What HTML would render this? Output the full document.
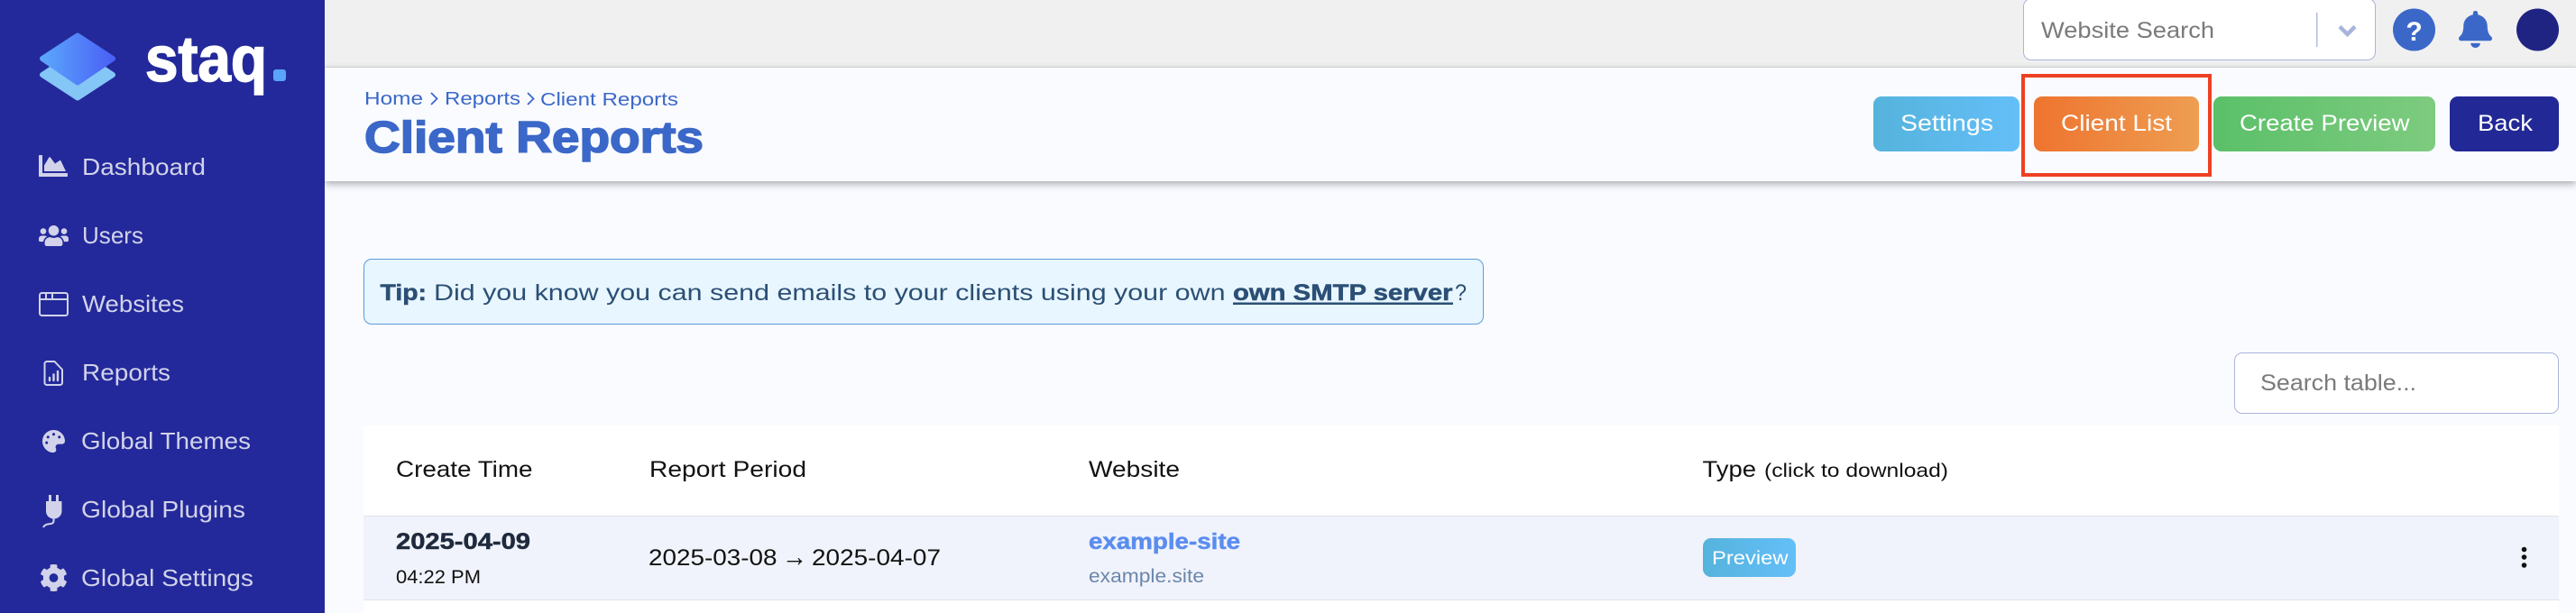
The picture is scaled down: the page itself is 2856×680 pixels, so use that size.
<!DOCTYPE html>
<html lang="en">
<head>
<meta charset="utf-8">
<title>Client Reports</title>
<style>
html,body{margin:0;padding:0;width:2856px;height:680px;overflow:hidden;background:#fafbff;font-family:"Liberation Sans",sans-serif}
.a{position:absolute;box-sizing:border-box}
svg{position:absolute;left:0;top:0}
text{font-family:"Liberation Sans",sans-serif}
</style>
</head>
<body>
<div class="a" style="left:360px;top:0;width:2496px;height:75px;background:#f0f0f0;border-bottom:1.500px solid #dcdcdc"></div>
<div class="a" style="left:360px;top:75px;width:2496px;height:126px;background:#fafbff;box-shadow:0 3px 8px rgba(60,60,70,.42)"></div>
<div class="a" style="left:0;top:0;width:360px;height:680px;background:#23299a"></div>
<div class="a" style="left:2243px;top:-2px;width:391px;height:69px;background:#fff;border:1px solid #a9b5dc;border-radius:9px"></div>
<div class="a" style="left:2077px;top:107px;width:162px;height:61px;border-radius:9px;background:linear-gradient(90deg,#55b3dc,#64bff8)"></div>
<div class="a" style="left:2255px;top:107px;width:183px;height:61px;border-radius:9px;background:linear-gradient(90deg,#ee742f,#ee9e52)"></div>
<div class="a" style="left:2454px;top:107px;width:246px;height:61px;border-radius:9px;background:linear-gradient(90deg,#5bc069,#7dcb7f)"></div>
<div class="a" style="left:2716px;top:107px;width:121px;height:61px;border-radius:9px;background:#222895"></div>
<div class="a" style="left:2241px;top:82px;width:211px;height:114px;border:4px solid #ee4023"></div>
<div class="a" style="left:403px;top:287px;width:1242px;height:73px;background:#e8f6ff;border:1px solid #5a9bd8;border-radius:9px"></div>
<div class="a" style="left:2477px;top:391px;width:360px;height:68px;background:#fff;border:1px solid #a9b5dc;border-radius:9px"></div>
<div class="a" style="left:403px;top:472px;width:2434px;height:208px;background:#fff"></div>
<div class="a" style="left:403px;top:572px;width:2434px;height:94px;background:#f0f3fb;border-top:1.500px solid #e0e2e7;border-bottom:1.500px solid #e0e2e7"></div>
<div class="a" style="left:1888px;top:597px;width:103px;height:43px;border-radius:9px;background:linear-gradient(90deg,#55b3dc,#64bff8)"></div>

<svg width="2856" height="680" viewBox="0 0 2856 680" xmlns="http://www.w3.org/2000/svg">
<defs>
<linearGradient id="lg" x1="0" y1="0" x2="1" y2="0"><stop offset="0" stop-color="#5ba6fb"/><stop offset="1" stop-color="#4a60f6"/></linearGradient>
</defs>
<!-- logo -->
<path d="M47 83L86 57L125 83L86 108.500Z" fill="#84c6f6" stroke="#84c6f6" stroke-width="6" stroke-linejoin="round"/>
<path d="M47 65L86 39.500L125 65L86 91.500Z" fill="url(#lg)" stroke="url(#lg)" stroke-width="6" stroke-linejoin="round"/>
<text x="161" y="90" font-size="71" font-weight="700" fill="#fff" stroke="#fff" stroke-width="1.600" textLength="135" lengthAdjust="spacingAndGlyphs">staq</text>
<rect x="303" y="77" width="14" height="13" rx="3" fill="#5ba4fb"/>

<!-- sidebar icons -->
<g fill="#d2d3ea">
<svg x="43" y="168" width="32" height="32" viewBox="0 0 512 512"><path d="M500 384c6.600 0 12 5.400 12 12v40c0 6.600-5.400 12-12 12H12c-6.600 0-12-5.400-12-12V76c0-6.600 5.400-12 12-12h40c6.600 0 12 5.400 12 12v308h436zM372.700 159.500L288 216l-85.300-113.700c-5.100-6.800-15.500-6.300-19.900 1L96 248v104h384l-89.900-187.800c-3.200-6.500-11.400-8.700-17.400-4.700z"/></svg>
<svg x="43" y="248" width="33" height="27" viewBox="0 0 640 512"><path d="M96 224c35.300 0 64-28.700 64-64s-28.700-64-64-64-64 28.700-64 64 28.700 64 64 64zm448 0c35.300 0 64-28.700 64-64s-28.700-64-64-64-64 28.700-64 64 28.700 64 64 64zm32 32h-64c-17.600 0-33.500 7.100-45.100 18.600 40.300 22.100 68.900 62 75.100 109.400h66c17.700 0 32-14.300 32-32v-32c0-35.300-28.700-64-64-64zm-256 0c61.900 0 112-50.100 112-112S381.900 32 320 32 208 82.100 208 144s50.100 112 112 112zm76.800 32h-8.300c-20.800 10-43.900 16-68.500 16s-47.600-6-68.500-16h-8.300C179.600 288 128 339.600 128 403.200V432c0 26.500 21.500 48 48 48h288c26.500 0 48-21.500 48-48v-28.800c0-63.600-51.600-115.200-115.200-115.200zm-223.700-13.400C161.500 263.100 145.600 256 128 256H64c-35.300 0-64 28.700-64 64v32c0 17.700 14.300 32 32 32h65.900c6.300-47.400 34.900-87.300 75.200-109.400z"/></svg>
<svg x="47" y="477" width="25" height="25" viewBox="0 0 512 512"><path d="M204.300 5C104.900 24.400 24.800 104.300 5.200 203.400c-37 187 131.700 326.400 258.800 306.700 41.200-6.400 61.400-54.600 42.500-91.700-23.100-45.400 9.900-98.400 60.900-98.400h79.700c35.800 0 64.800-29.600 64.900-65.300C511.500 97.100 368.100-26.900 204.300 5zM96 320c-17.700 0-32-14.300-32-32s14.300-32 32-32 32 14.300 32 32-14.300 32-32 32zm32-128c-17.700 0-32-14.300-32-32s14.300-32 32-32 32 14.300 32 32-14.300 32-32 32zm128-64c-17.700 0-32-14.300-32-32s14.300-32 32-32 32 14.300 32 32-14.300 32-32 32zm128 64c-17.700 0-32-14.300-32-32s14.300-32 32-32 32 14.300 32 32-14.300 32-32 32z"/></svg>
<svg x="44" y="625" width="31" height="32" viewBox="0 0 512 512"><path d="M487.400 315.700l-42.600-24.600c4.300-23.200 4.300-47 0-70.200l42.600-24.600c4.900-2.800 7.100-8.600 5.500-14-11.100-35.600-30-67.800-54.700-94.600-3.800-4.100-10-5.100-14.800-2.300L380.800 110c-17.900-15.400-38.500-27.300-60.800-35.100V25.800c0-5.600-3.900-10.500-9.400-11.700-36.700-8.200-74.300-7.800-109.200 0-5.500 1.200-9.400 6.100-9.400 11.700V75c-22.200 7.900-42.800 19.800-60.800 35.100L88.700 85.500c-4.900-2.800-11-1.900-14.800 2.300-24.700 26.700-43.600 58.900-54.700 94.600-1.700 5.400.6 11.200 5.500 14L67.300 221c-4.300 23.200-4.300 47 0 70.200l-42.600 24.600c-4.900 2.800-7.100 8.600-5.500 14 11.100 35.600 30 67.800 54.700 94.600 3.800 4.100 10 5.100 14.800 2.300l42.600-24.600c17.900 15.400 38.500 27.300 60.800 35.100v49.200c0 5.600 3.900 10.500 9.400 11.700 36.700 8.200 74.300 7.800 109.200 0 5.500-1.200 9.400-6.100 9.400-11.700v-49.200c22.200-7.900 42.800-19.800 60.800-35.100l42.600 24.600c4.900 2.800 11 1.900 14.800-2.300 24.700-26.700 43.600-58.900 54.700-94.600 1.500-5.500-.7-11.300-5.600-14.100zM256 336c-44.100 0-80-35.900-80-80s35.900-80 80-80 80 35.900 80 80-35.900 80-80 80z"/></svg>
<!-- plug -->
<rect x="54" y="549" width="3" height="10"/><rect x="62" y="549" width="3" height="10"/>
<path d="M51 556h17.500v11c0 5-4 8.500-8.750 8.500S51 572 51 567z"/>
</g>
<g fill="none" stroke="#d2d3ea">
<path d="M59.500 574v3.500c0 4-3.500 3.500-6.500 4-2.500.5-4 1.500-5 3.500" stroke-width="2"/>
<!-- window -->
<rect x="44" y="325" width="31" height="25" rx="2.500" stroke-width="2"/>
<path d="M44 332h31M51 325v7M58 325v7" stroke-width="2"/>
<!-- report -->
<path d="M52 401h8.500L69 410v14.500a2.500 2.500 0 0 1-2.500 2.500H52a2.500 2.500 0 0 1-2.500-2.500v-21A2.500 2.500 0 0 1 52 401z" stroke-width="2" stroke-linejoin="round"/>
<path d="M55 422v-3M59.500 422v-6.500M64 422v-10" stroke-width="2.400" stroke-linecap="round"/>
</g>

<!-- sidebar labels -->
<g font-size="26" fill="#d2d3ea">
<text x="91" y="194" textLength="137" lengthAdjust="spacingAndGlyphs">Dashboard</text>
<text x="91" y="270" textLength="68" lengthAdjust="spacingAndGlyphs">Users</text>
<text x="91" y="346" textLength="113" lengthAdjust="spacingAndGlyphs">Websites</text>
<text x="91" y="422" textLength="98" lengthAdjust="spacingAndGlyphs">Reports</text>
<text x="90" y="498" textLength="188" lengthAdjust="spacingAndGlyphs">Global Themes</text>
<text x="90" y="574" textLength="182" lengthAdjust="spacingAndGlyphs">Global Plugins</text>
<text x="90" y="650" textLength="191" lengthAdjust="spacingAndGlyphs">Global Settings</text>
</g>

<!-- breadcrumb -->
<g font-size="20.500" fill="#3b68c8">
<text x="404" y="116" textLength="65" lengthAdjust="spacingAndGlyphs">Home</text>
<text x="493" y="116" textLength="84" lengthAdjust="spacingAndGlyphs">Reports</text>
<text x="599" y="117" textLength="153" lengthAdjust="spacingAndGlyphs">Client Reports</text>
</g>
<path d="M478 103l6.500 6.500-6.500 6.500M585 103l6.500 6.500-6.500 6.500" fill="none" stroke="#3b68c8" stroke-width="1.800"/>
<text x="404" y="169" font-size="49" font-weight="700" fill="#3b68c8" stroke="#3b68c8" stroke-width="1.600" textLength="376" lengthAdjust="spacingAndGlyphs">Client Reports</text>

<!-- top bar -->
<text x="2263" y="42" font-size="25" fill="#7a7a7a" textLength="192" lengthAdjust="spacingAndGlyphs">Website Search</text>
<rect x="2568" y="14" width="1.500" height="38" fill="#b0bbe0"/>
<path d="M2594 29.500l8.500 8.500 8.500-8.500" fill="none" stroke="#a9b4dc" stroke-width="4.500"/>
<circle cx="2676.500" cy="33" r="23.500" fill="#3b68c8"/>
<text x="2676.500" y="45" font-size="30" font-weight="700" fill="#fff" text-anchor="middle">?</text>
<svg x="2726" y="12" width="37" height="41" viewBox="0 0 448 512" preserveAspectRatio="none"><path fill="#3b68c8" d="M224 512c35.320 0 63.970-28.650 63.970-64H160.030c0 35.350 28.650 64 63.970 64zm215.390-149.710c-19.320-20.760-55.470-51.990-55.470-154.290 0-77.700-54.480-139.900-127.940-155.160V32c0-17.670-14.320-32-31.980-32s-31.980 14.330-31.980 32v20.840C118.560 68.100 64.080 130.300 64.080 208c0 102.300-36.150 133.530-55.470 154.290-6 6.450-8.660 14.160-8.610 21.710.11 16.400 12.980 32 32.100 32h383.800c19.120 0 32-15.600 32.100-32 .05-7.550-2.610-15.270-8.610-21.710z"/></svg>
<circle cx="2813.500" cy="33" r="23.500" fill="#1f2483"/>

<!-- buttons -->
<g font-size="25" fill="#fff">
<text x="2107" y="145" textLength="103" lengthAdjust="spacingAndGlyphs">Settings</text>
<text x="2285" y="145" textLength="123" lengthAdjust="spacingAndGlyphs">Client List</text>
<text x="2483" y="145" textLength="188.500" lengthAdjust="spacingAndGlyphs">Create Preview</text>
<text x="2747" y="145" textLength="61" lengthAdjust="spacingAndGlyphs">Back</text>
</g>

<!-- tip -->
<g font-size="25" fill="#2b4f75">
<text x="421.500" y="333" font-weight="700" stroke="#2b4f75" stroke-width=".5" textLength="51.500" lengthAdjust="spacingAndGlyphs">Tip:</text>
<text x="481" y="333" textLength="877.500" lengthAdjust="spacingAndGlyphs">Did you know you can send emails to your clients using your own</text>
<text x="1367" y="333" font-weight="700" stroke="#2b4f75" stroke-width=".5" textLength="243.500" lengthAdjust="spacingAndGlyphs">own SMTP server</text>
<text x="1613" y="333" textLength="13" lengthAdjust="spacingAndGlyphs">?</text>
</g>
<rect x="1367" y="335.500" width="244" height="2.500" fill="#2b4f75"/>

<text x="2506" y="433" font-size="25" fill="#7a7a7a" textLength="173" lengthAdjust="spacingAndGlyphs">Search table...</text>

<!-- table header -->
<g font-size="25" fill="#111">
<text x="439" y="529" textLength="151.500" lengthAdjust="spacingAndGlyphs">Create Time</text>
<text x="720" y="529" textLength="174" lengthAdjust="spacingAndGlyphs">Report Period</text>
<text x="1207" y="529" textLength="101" lengthAdjust="spacingAndGlyphs">Website</text>
<text x="1887.500" y="529" textLength="59.500" lengthAdjust="spacingAndGlyphs">Type</text>
<text x="1956" y="529" font-size="21.500" textLength="204" lengthAdjust="spacingAndGlyphs">(click to download)</text>
</g>

<!-- table row -->
<text x="439" y="609" font-size="25" font-weight="700" fill="#1f2a3d" stroke="#1f2a3d" stroke-width=".5" textLength="149" lengthAdjust="spacingAndGlyphs">2025-04-09</text>
<text x="439" y="647" font-size="21" fill="#111" textLength="94" lengthAdjust="spacingAndGlyphs">04:22 PM</text>
<g font-size="25" fill="#111">
<text x="719" y="627" textLength="142.500" lengthAdjust="spacingAndGlyphs">2025-03-08</text>
<text x="867" y="628" font-size="32" textLength="28" lengthAdjust="spacingAndGlyphs">→</text>
<text x="900" y="627" textLength="143" lengthAdjust="spacingAndGlyphs">2025-04-07</text>
</g>
<text x="1207" y="609" font-size="25" font-weight="700" fill="#5b8def" stroke="#5b8def" stroke-width=".5" textLength="168" lengthAdjust="spacingAndGlyphs">example-site</text>
<text x="1207" y="646" font-size="21" fill="#6b85ab" textLength="128" lengthAdjust="spacingAndGlyphs">example.site</text>
<text x="1898" y="626" font-size="21" fill="#fff" textLength="84.500" lengthAdjust="spacingAndGlyphs">Preview</text>
<g fill="#111"><circle cx="2798.500" cy="609.500" r="2.800"/><circle cx="2798.500" cy="618" r="2.800"/><circle cx="2798.500" cy="627" r="2.800"/></g>
</svg>
</body>
</html>
